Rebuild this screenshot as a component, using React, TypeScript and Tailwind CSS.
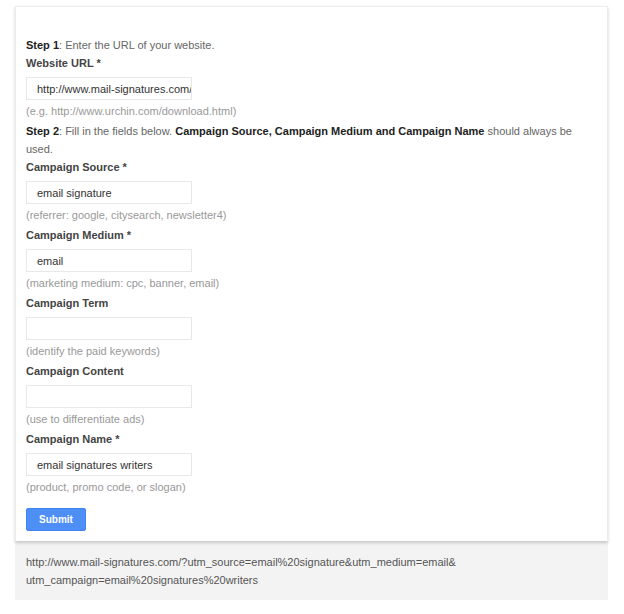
const fields = [
  { label: "Campaign Source *", value: "email signature", hint: "(referrer: google, citysearch, newsletter4)" },
  { label: "Campaign Medium *", value: "email", hint: "(marketing medium: cpc, banner, email)" },
  { label: "Campaign Term", value: "", hint: "(identify the paid keywords)" },
  { label: "Campaign Content", value: "", hint: "(use to differentiate ads)" },
  { label: "Campaign Name *", value: "email signatures writers", hint: "(product, promo code, or slogan)" },
];

function Field({ label, value, hint }: { label: string; value: string; hint: string }) {
  return (
    <div className="flex flex-col">
      <div className="font-bold text-[#444]">{label}</div>
      <input
        readOnly
        value={value}
        className="mt-[5px] w-[166px] h-[23px] border border-[#e8e8e8] pl-[10px] text-[11px] text-[#333] outline-none"
      />
      <div className="mt-[2px] mb-[2px] text-[#999]">{hint}</div>
    </div>
  );
}

export default function App() {
  return (
    <div className="bg-white min-h-[614px] pt-[6px] pl-[15px] text-[11px] leading-[18px] font-['Liberation_Sans',Arial,sans-serif]">
      <div className="w-[593px]">
        <div className="relative z-10 bg-white border border-b-0 border-[#ececec] pt-[29px] pl-[10px] pr-[10px] pb-[10px] shadow-[0_2px_3px_rgba(0,0,0,0.18)]">
          <div className="text-[#666]">
            <span className="font-bold text-[#222]">Step 1</span>: Enter the URL of your website.
          </div>
          <Field
            label="Website URL *"
            value="http://www.mail-signatures.com/"
            hint="(e.g. http://www.urchin.com/download.html)"
          />
          <div className="text-[#666]">
            <span className="font-bold text-[#222]">Step 2</span>: Fill in the fields below.{" "}
            <span className="font-bold text-[#222]">
              Campaign Source, Campaign Medium and Campaign Name
            </span>{" "}
            should always be used.
          </div>
          {fields.map((f) => (
            <Field key={f.label} label={f.label} value={f.value} hint={f.hint} />
          ))}
          <button className="mt-[10px] w-[60px] h-[23px] rounded-[2px] border border-[#3f84f0] bg-[#4d8ff5] text-white text-[10px] font-bold">
            Submit
          </button>
        </div>
        <div className="bg-[#f3f3f3] pt-[12px] pb-[11px] pl-[11px] pr-[10px] text-[#555]">
          http://www.mail-signatures.com/?utm_source=email%20signature&amp;utm_medium=email&amp;
          <br />
          utm_campaign=email%20signatures%20writers
        </div>
      </div>
    </div>
  );
}
